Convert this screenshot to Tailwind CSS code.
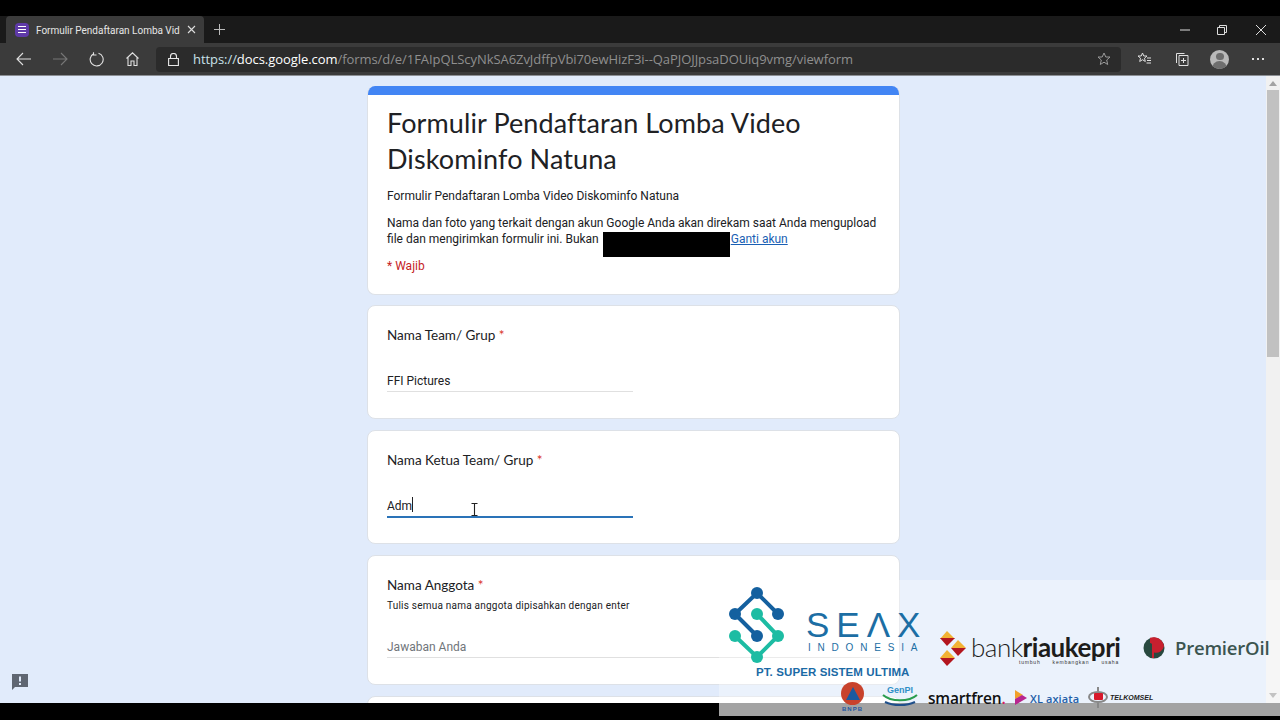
<!DOCTYPE html>
<html lang="en">
<head>
    <meta charset="UTF-8">
    <meta name="viewport" content="width=device-width, initial-scale=1.0">
    <script src="https://cdn.jsdelivr.net/npm/@tailwindcss/browser@4"></script>
    <title>Formulir Pendaftaran Lomba Video</title>
</head>
<body class="bg-black font-['Roboto',sans-serif] h-[720px] w-[1280px] overflow-hidden relative">

<!-- browser chrome -->
<div class="pt-4">
    <div class="h-[27px] bg-[#1a1a1a] flex items-end pl-[6px]">
        <div class="w-[198px] h-[27px] bg-[#3b3b3b] rounded-t flex items-center pl-[9px] pr-[8px]">
            <div class="w-[14px] h-[14px] rounded-sm bg-[#5f3aa8] flex flex-col items-center justify-center gap-[2px] shrink-0">
                <span class="block w-2 h-px bg-white"></span>
                <span class="block w-2 h-px bg-white"></span>
                <span class="block w-2 h-px bg-white"></span>
            </div>
            <span class="ml-[7px] pt-px text-[10px] tracking-[-0.02px] text-[#e6e6e6] whitespace-nowrap font-['Roboto',sans-serif]">Formulir Pendaftaran Lomba Vid</span>
            <svg class="ml-auto shrink-0" width="9" height="9" viewBox="0 0 9 9" stroke="#ddd" stroke-width="1.1"><path d="M1 1l7 7M8 1l-7 7"/></svg>
        </div>
        <svg class="ml-[10px] mb-[8px]" width="11" height="11" viewBox="0 0 11 11" stroke="#bbb"><path d="M5.500 0v11M0 5.500h11"/></svg>
        <div class="ml-auto flex items-center h-[27px] text-white">
            <svg class="mr-[27px]" width="10" height="10" viewBox="0 0 10 10" stroke="#ddd"><path d="M0 5h10"/></svg>
            <svg class="mr-[29px]" width="10" height="10" viewBox="0 0 10 10" fill="none" stroke="#ddd"><path d="M.5 2.500h7v7h-7zM2.500 2.500V.5h7v7h-2"/></svg>
            <svg class="mr-[14px]" width="10" height="10" viewBox="0 0 10 10" stroke="#ddd"><path d="M0 0l10 10M10 0L0 10"/></svg>
        </div>
    </div>
    <div class="h-[32px] bg-[#3b3b3b] flex items-center pl-[16px] pr-[16px]">
        <svg width="15" height="14" viewBox="0 0 15 14" fill="none" stroke="#e0e0e0" stroke-width="1.1"><path d="M15 7H1M7 1L1 7l6 6"/></svg>
        <svg class="ml-[22px]" width="15" height="14" viewBox="0 0 15 14" fill="none" stroke="#777" stroke-width="1.1"><path d="M0 7h14M8 1l6 6-6 6"/></svg>
        <svg class="ml-[21px]" width="15" height="15" viewBox="0 0 15 15" fill="none" stroke="#e0e0e0" stroke-width="1.1"><path d="M9.500 1.200A6.500 6.500 0 1 1 5 1.500M4.500 .2V3h3"/></svg>
        <svg class="ml-[22px]" width="13" height="14" viewBox="0 0 13 14" fill="none" stroke="#e0e0e0" stroke-width="1.1"><path d="M.5 6.500L6.500.8l6 5.700M2 5.500v8h3V9h3v4.500h3v-8"/></svg>
        <div class="ml-[17px] w-[965px] h-[25px] bg-[#2b2b2b] rounded-sm flex items-center pl-[12px] pr-[10px]">
            <svg width="11" height="13" viewBox="0 0 11 13" fill="none" stroke="#e8e8e8" stroke-width="1.1"><path d="M.6 5.500h9.800v7H.6zM2.500 5.500V3.500a3 3 0 0 1 6 0v2"/></svg>
            <span class="ml-[14px] mt-[2px] text-[13px] tracking-[-0.06px] text-[#8f8f8f] whitespace-nowrap font-['Open_Sans',sans-serif]"><span class="text-[#c8e0e8]">https://</span><span class="text-white">docs.google.com</span>/forms/d/e/1FAIpQLScyNkSA6ZvJdffpVbi70ewHizF3i--QaPJOJJpsaDOUiq9vmg/viewform</span>
            <svg class="ml-auto" width="14" height="14" viewBox="0 0 14 14" fill="none" stroke="#9a9a9a"><path d="M7 1l1.800 4h4.200L9.700 8l1 4.500L7 10.200 3.300 12.500l1-4.500L1 5h4.200z"/></svg>
        </div>
        <svg class="ml-[16px]" width="14" height="14" viewBox="0 0 14 14" fill="none" stroke="#e0e0e0"><path d="M5.500 1l1.300 3h3.200l-2.500 2.200.8 3.300-2.800-1.800-2.800 1.800.8-3.300L1 4h3.200zM10 6h4M10 8.500h4M9.500 11h4.500"/></svg>
        <svg class="ml-[24px]" width="14" height="14" viewBox="0 0 14 14" fill="none" stroke="#e0e0e0"><path d="M4 3.500h9v10H4zM1.500 11V1.500h8M8.500 6v5M6 8.500h5"/></svg>
        <div class="ml-[21px] w-[19px] h-[19px] rounded-full bg-[#b9b9b9] overflow-hidden flex flex-col items-center">
            <span class="block mt-[3px] w-[8px] h-[8px] rounded-full bg-[#6e6e6e]"></span>
            <span class="block mt-px w-[15px] h-[8px] rounded-t-full bg-[#6e6e6e]"></span>
        </div>
        <div class="ml-[23px] flex gap-[3px]">
            <span class="block w-[2px] h-[2px] bg-[#ddd]"></span>
            <span class="block w-[2px] h-[2px] bg-[#ddd]"></span>
            <span class="block w-[2px] h-[2px] bg-[#ddd]"></span>
        </div>
    </div>
    <div class="h-[1px] bg-[#8c8f94]"></div>
</div>

<!-- page -->
<div class="h-[627px] bg-[#e1ebfb] flex overflow-hidden relative">
    <div class="flex-1 pt-[10px] pl-[367px]">
        <div class="w-[533px] flex flex-col gap-[11px]">
            <!-- header card -->
            <div class="h-[209px] bg-white rounded-lg border border-[#dde1e7] border-t-0 overflow-hidden">
                <div class="h-[9px] bg-[#4285f4] -mx-px"></div>
                <div class="px-[19px] pt-[10px]">
                    <h1 class="text-[27px] leading-[36px] tracking-[0.1px] text-[#202124] font-['Lato',sans-serif] whitespace-nowrap">Formulir Pendaftaran Lomba Video<br>Diskominfo Natuna</h1>
                    <p class="mt-[11px] text-[12px] leading-[16px] text-[#202124] whitespace-nowrap">Formulir Pendaftaran Lomba Video Diskominfo Natuna</p>
                    <div class="mt-[11px] text-[12px] leading-[16px] text-[#202124] whitespace-nowrap">
                        <p>Nama dan foto yang terkait dengan akun Google Anda akan direkam saat Anda mengupload</p>
                        <p class="flex items-start">file dan mengirimkan formulir ini. Bukan <span class="block w-[127px] h-[25px] mt-px bg-black ml-[4px] mr-[1px] shrink-0"></span><a class="text-[#1a5fb4] underline">Ganti akun</a></p>
                    </div>
                    <p class="mt-[1px] text-[12px] leading-[16px] text-[#c5221f]">* Wajib</p>
                </div>
            </div>
            <!-- question cards -->
            <div class="h-[114px] -mt-px bg-white rounded-lg border border-[#dde1e7] px-[19px] pt-[20px]">
                <p class="text-[13.500px] leading-[18px] text-[#202124] font-['Lato',sans-serif]">Nama Team/ Grup <span class="text-[#d93025]">*</span></p>
                <div class="mt-[28px] w-[246px] h-[20px] border-b border-[#e0e0e0] text-[12px] leading-[18px] text-[#202124]">FFI Pictures</div>
            </div>
            <div class="h-[114px] bg-white rounded-lg border border-[#dde1e7] px-[19px] pt-[20px]">
                <p class="text-[13.500px] leading-[18px] text-[#202124] font-['Lato',sans-serif]">Nama Ketua Team/ Grup <span class="text-[#d93025]">*</span></p>
                <div class="mt-[28px] w-[246px] h-[21px] border-b-2 border-[#2a73b8] text-[12px] leading-[18px] text-[#202124] flex items-start">Adm<span class="block w-px h-[15px] bg-[#202124]"></span></div>
            </div>
            <div class="h-[130px] bg-white rounded-lg border border-[#dde1e7] px-[19px] pt-[20px]">
                <p class="text-[13.500px] leading-[18px] text-[#202124] font-['Lato',sans-serif]">Nama Anggota <span class="text-[#d93025]">*</span></p>
                <p class="mt-[5px] text-[10px] leading-[14px] tracking-[0.22px] text-[#202124]">Tulis semua nama anggota dipisahkan dengan enter</p>
                <div class="mt-[26px] h-[19px] border-b border-[#e0e0e0] text-[12px] leading-[16px] text-[#70757a]">Jawaban Anda</div>
            </div>
            <div class="h-[40px] bg-white rounded-t-lg border border-[#dde1e7]"></div>
        </div>
    </div>
    <!-- scrollbar -->
    <div class="w-[14px] bg-[#f1f1f1] flex flex-col items-center">
        <svg class="mt-[5px]" width="8" height="5" viewBox="0 0 8 5" fill="#a3a3a3"><path d="M4 0l4 5H0z"/></svg>
        <div class="mt-[4px] w-[12px] h-[267px] bg-[#c1c1c1]"></div>
        <svg class="mt-auto mb-[5px]" width="8" height="5" viewBox="0 0 8 5" fill="#a3a3a3"><path d="M0 0h8L4 5z"/></svg>
    </div>
    <!-- feedback button -->
    <svg class="absolute left-[11px] top-[597px]" width="18" height="18" viewBox="0 0 18 18" fill="#5f6672"><path d="M1 1h16v13H4l-3 3z"/><path d="M8 3.500h2v5H8zM8 10h2v2H8z" fill="#e1ebfb"/></svg>
</div>

<!-- gray strip of the video overlay -->
<div class="absolute left-[719px] top-[703px] w-[561px] h-[13px] bg-[#a3a3a3]"></div>

<!-- sponsor overlay -->
<div class="absolute left-[719px] top-[580px] w-[561px] h-[123px] bg-white/35">
    <!-- seax logo -->
    <svg class="absolute left-[9px] top-[6px]" width="58" height="80" viewBox="0 0 58 80" fill="none" stroke-width="4">
        <path d="M7 28L29 7l21 21M7 28l22 22" stroke="#14609f"/>
        <path d="M29 28l21 22-21 21L7 50" stroke="#1dbca3"/>
        <circle cx="29" cy="7" r="6" fill="#14609f" stroke="none"/>
        <circle cx="7" cy="28" r="6" fill="#14609f" stroke="none"/>
        <circle cx="50" cy="28" r="6" fill="#14609f" stroke="none"/>
        <circle cx="29" cy="50" r="6" fill="#14609f" stroke="none"/>
        <circle cx="29" cy="28" r="6" fill="#1dbca3" stroke="none"/>
        <circle cx="7" cy="50" r="6" fill="#1dbca3" stroke="none"/>
        <circle cx="50" cy="50" r="6" fill="#1dbca3" stroke="none"/>
        <circle cx="29" cy="71" r="6" fill="#1dbca3" stroke="none"/>
    </svg>
    <div class="absolute left-[87px] top-[25px] text-[35px] leading-[40px] tracking-[7px] text-[#1c6ea4] font-['Liberation_Sans',sans-serif] whitespace-nowrap">SEΛX</div>
    <div class="absolute left-[89px] top-[62px] text-[10px] leading-[12px] tracking-[6.800px] text-[#1c6ea4] font-['Liberation_Sans',sans-serif] whitespace-nowrap">INDONESIA</div>
    <div class="absolute left-[37px] top-[85px] text-[11.500px] leading-[15px] font-bold tracking-[0.1px] text-[#1b6aa5] font-['Liberation_Sans',sans-serif] whitespace-nowrap">PT. SUPER SISTEM ULTIMA</div>

    <!-- bank riau kepri -->
    <svg class="absolute left-[220px] top-[49px]" width="28" height="38" viewBox="0 0 28 38">
        <path d="M8 2l8 8H1z" fill="#f2b233"/><path d="M1 9h15l-8 8z" fill="#b3161e"/>
        <path d="M19 11l8 8H12z" fill="#f2b233"/><path d="M12 19h15l-8 8z" fill="#b3161e"/>
        <path d="M8 21l8 8H1z" fill="#f2b233"/><path d="M1 29h15l-8 8z" fill="#b3161e"/>
    </svg>
    <div class="absolute left-[252px] top-[56px] text-[26px] leading-[22px] tracking-[-0.5px] text-[#1d1d1b] font-['Lato',sans-serif] font-light whitespace-nowrap">bank<span class="font-bold">riaukepri</span></div>
    <div class="absolute left-[300px] top-[79px] w-[100px] flex justify-between text-[5px] leading-[6px] tracking-[0.8px] text-[#333] font-['Liberation_Sans',sans-serif] whitespace-nowrap"><span>tumbuh</span><span>kembangkan</span><span>usaha</span></div>

    <!-- premier oil -->
    <svg class="absolute left-[424px] top-[57px]" width="22" height="22" viewBox="0 0 22 22">
        <circle cx="11" cy="11" r="10.500" fill="#28493f"/>
        <path d="M7 .8A10.500 10.500 0 0 1 21 9a8 8 0 0 1-10 6.500V21H9V7a3 3 0 0 0-2-1z" fill="#c8202f"/>
    </svg>
    <div class="absolute left-[456px] top-[55px] text-[18.500px] leading-[26px] font-semibold tracking-[-0.2px] text-[#3b5550] font-['Open_Sans',sans-serif] whitespace-nowrap">PremierOil</div>

    <!-- bottom row -->
    <div class="absolute left-[122px] top-[102px] w-[23px] h-[23px] rounded-full bg-[#c8422c] flex items-center justify-center">
        <svg width="14" height="13" viewBox="0 0 14 13" fill="#1c5aa0"><path d="M7 0l7 13H0z"/></svg>
    </div>
    <div class="absolute left-[122px] top-[125px] w-[23px] text-center text-[6px] leading-[8px] font-bold tracking-[1px] text-[#2456a0] font-['Liberation_Sans',sans-serif]">BNPB</div>
    <div class="absolute left-[164px] top-[105px] w-[34px] text-center text-[9px] leading-[10px] font-bold text-[#2f8fc7] font-['Liberation_Sans',sans-serif]">GenPI</div>
    <svg class="absolute left-[163px] top-[114px]" width="36" height="12" viewBox="0 0 36 12" fill="none"><path d="M1 1c8 7 26 7 34 0" stroke="#2a9d4e" stroke-width="2"/><path d="M3 8c8 4 22 4 30 0" stroke="#1f4f8a" stroke-width="2"/></svg>
    <div class="absolute left-[209px] top-[108px] text-[15.500px] leading-[20px] font-semibold tracking-[-0.2px] text-[#111] font-['Open_Sans',sans-serif] whitespace-nowrap">smartfren<span class="text-[#d81b60]">.</span></div>
    <svg class="absolute left-[296px] top-[110px]" width="12" height="15" viewBox="0 0 12 15"><path d="M0 0l8 5-8 4z" fill="#f2a12b"/><path d="M0 15l12-7-5-3-7 4z" fill="#b8268f"/></svg>
    <div class="absolute left-[311px] top-[111px] text-[11px] leading-[16px] font-semibold tracking-[0.1px] text-[#1f5fa8] font-['Open_Sans',sans-serif] whitespace-nowrap">XL axiata</div>
    <svg class="absolute left-[369px] top-[107px]" width="21" height="22" viewBox="0 0 21 22" fill="none"><ellipse cx="10" cy="10" rx="9" ry="5" stroke="#888" stroke-width="2"/><path d="M10 0v4M10 16v5" stroke="#888" stroke-width="2"/><rect x="6" y="6" width="9" height="7" rx="1" fill="#d7182a"/></svg>
    <div class="absolute left-[391px] top-[112px] text-[7px] leading-[12px] font-bold italic text-[#222] font-['Liberation_Sans',sans-serif] whitespace-nowrap">TELKOMSEL</div>
</div>

<!-- text cursor -->
<svg class="absolute left-[471px] top-[503px]" width="7" height="13" viewBox="0 0 7 13" fill="none" stroke="#222" stroke-width="1.100"><path d="M.5.500h6M3.500.500v12M.5 12.500h6"/></svg>

</body>
</html>
